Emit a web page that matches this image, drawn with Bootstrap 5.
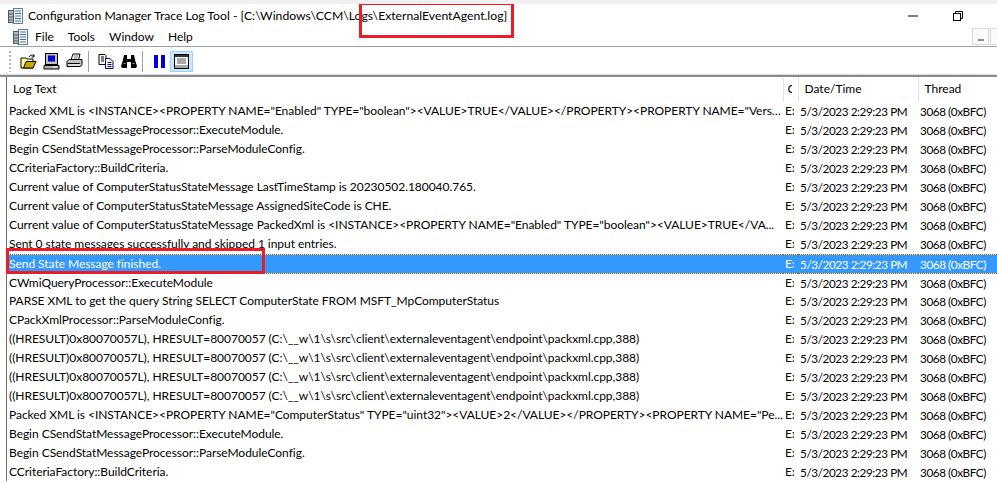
<!DOCTYPE html>
<html lang="en"><head><meta charset="utf-8"><title>Configuration Manager Trace Log Tool</title>
<link href="https://cdn.jsdelivr.net/npm/bootstrap@5.3.0/dist/css/bootstrap.min.css" rel="stylesheet">
<style>
html,body{height:483px;overflow:hidden;background:#fff}
body{font-family:"Lato","Noto Sans",sans-serif;font-size:12px;color:#000;position:relative;border-top:4px solid #f0f0f0}
.titlebar{height:23px;background:#fff;padding-left:7px;padding-top:1px;gap:5px;font-size:12.2px}
.winbtns{margin-left:auto;gap:35px;padding-right:34px}
.menubar{height:19px;background:#fff;padding-left:12px;padding-top:1px}
.menubar span{margin-right:14px}
.menubar svg{margin-right:7px}
.mdibtn{width:17px;height:17px;border:1px solid #d9d9d9;background:#fbfbfb;display:flex;align-items:flex-end;justify-content:center;padding-bottom:3px;flex:none}
.mdibtn i{display:block;width:6px;height:2px;background:#8a8f96}
.mdiwrap{margin-left:auto;margin-right:-10px;margin-top:-1px;gap:1px}
.toolbar{background:#fff;border-top:1px solid #a0a0a0;border-bottom:2px solid #8c8c8c;padding-left:9px;height:31px;box-shadow:inset 0 -1px 0 #d8d8d8}
.grip{width:2px;height:21px;margin-right:6px;background:repeating-linear-gradient(#b5b5b5 0 2px,transparent 2px 4px)}
.tool{width:23px;height:21px;display:flex;align-items:center;justify-content:center}
.tool.on{background:#cce8ff;border:1px solid #99d1ff;margin-left:-1px}
.sepv{width:1px;height:21px;background:#a0a0a0;margin:0 5px 0 2px}
.logwrap{margin-left:6px;background:#fff;border-left:1px solid #6d6d6d;height:404px;overflow:hidden;margin-bottom:2px}
.logtable{table-layout:fixed;width:990px;margin:0;border-collapse:collapse}
.logtable th,.logtable td{padding:0;white-space:nowrap;overflow:hidden;border:0;font-weight:400;background:transparent;color:#000}
.logtable th{height:25px;padding-left:6px;border-right:1px solid #e5e5e5;padding-bottom:4px}
.logtable td{height:19px;padding-left:2px;line-height:18px;text-overflow:ellipsis;letter-spacing:-.04px}
.logtable td.num{letter-spacing:-.4px;font-size:11.7px}
.logtable tr.sel td{background:#3399ff;color:#fff;border-top:1px dotted #8a5a10;border-bottom:1px dotted #8a5a10}
.clip{display:block;width:9px;overflow:hidden}
.cliph{display:block;width:4px;overflow:hidden}
.c1{width:776px}.c2{width:15px}.c3{width:120px}.c4{width:79px}
.mark-box{position:absolute;border:3px solid #ed1c24;pointer-events:none}
.mark-title{left:359px;top:-2px;width:155px;height:36px}
.mark-row{left:6px;top:244px;width:259px;height:26px}
</style></head>
<body>
<div class="titlebar d-flex align-items-center">
<svg width="16" height="16" viewBox="0 0 16 16"><rect x="6.500" y=".5" width="9" height="15" fill="#fff" stroke="#5f7f9f"/><path d="M8 3h6M8 5.500h6M8 8h6M8 10.500h6M8 13h6" stroke="#3a6ea5"/><rect x="1.500" y="2.500" width="5" height="12" fill="#b4bec8" stroke="#4f5b68"/><path d="M2 6h4M2 9h4M2 12h4" stroke="#4f5b68"/></svg>
<span>Configuration Manager Trace Log Tool - [C:\Windows\CCM\Logs\ExternalEventAgent.log]</span>
<div class="winbtns d-flex align-items-center">
<svg width="10" height="10" viewBox="0 0 10 10"><path d="M0 5h10" stroke="#000"/></svg>
<svg width="10" height="10" viewBox="0 0 10 10" fill="none" stroke="#000"><path d="M2.500 2.500V.5h7v7h-2"/><rect x=".5" y="2.500" width="7" height="7"/></svg>
</div></div>
<div class="menubar d-flex align-items-center">
<svg width="16" height="16" viewBox="0 0 16 16"><rect x="6.500" y=".5" width="9" height="15" fill="#fff" stroke="#5f7f9f"/><path d="M8 3h6M8 5.500h6M8 8h6M8 10.500h6M8 13h6" stroke="#3a6ea5"/><rect x="1.500" y="2.500" width="5" height="12" fill="#b4bec8" stroke="#4f5b68"/><path d="M2 6h4M2 9h4M2 12h4" stroke="#4f5b68"/></svg>
<span>File</span><span>Tools</span><span>Window</span><span>Help</span>
<div class="mdiwrap d-flex"><div class="mdibtn"><i></i></div><div class="mdibtn"></div></div>
</div>
<div class="toolbar d-flex align-items-center">
<div class="grip"></div>
<div class="tool"><svg width="17" height="15" viewBox="0 0 17 15"><path d="M1 4h5l1 1h6v9H1z" fill="#ffff99" stroke="#000"/><path d="M3.500 14 6 7.500h10L13 14z" fill="#c8a800" stroke="#000"/><path d="M9 3c1-2 3-2.500 5-1.500M14 .5v2.500h-2.500" fill="none" stroke="#000"/></svg></div>
<div class="tool"><svg width="17" height="17" viewBox="0 0 17 17"><rect x="2.500" y=".5" width="12" height="11" fill="#c0c0c0" stroke="#000"/><rect x="5" y="2.500" width="7" height="6" fill="#0000c8"/><path d="M1 12.500h15v3.500H1z" fill="#b5b5b5" stroke="#000"/><path d="M10 14h4" stroke="#fff"/></svg></div>
<div class="tool"><svg width="17" height="16" viewBox="0 0 17 16"><path d="M5 7 7 1h7l-1.500 6z" fill="#fff" stroke="#000"/><path d="M1 8.500 3 6.500h13v5l-1.500 2H1z" fill="#c0c0c0" stroke="#000"/><path d="M2 10.500h12" stroke="#000"/><path d="M3 12h11" stroke="#fff"/><path d="M8 3h4M7.500 5h4" stroke="#777"/></svg></div>
<div class="sepv"></div>
<div class="tool"><svg width="16" height="15" viewBox="0 0 16 15"><path d="M1 .5h6l1 1v9H1z" fill="#fff" stroke="#000"/><path d="M3 3h3M3 5h3M3 7h3" stroke="#000"/><path d="M7.500 4.500H12l3 3v7H7.500z" fill="#fff" stroke="#000080"/><path d="M9.500 8.500h4M9.500 10.500h4M9.500 12.500h4" stroke="#000080"/></svg></div>
<div class="tool"><svg width="16" height="14" viewBox="0 0 16 14"><path d="M3 1h3v4h4V1h3l1 5 2 6-1 2H10V8H6v6H1L0 12l2-6z" fill="#000"/><path d="M2.500 9.500h2M11.500 9.500h2" stroke="#9a9a9a"/></svg></div>
<div class="sepv"></div>
<div class="tool"><svg width="11" height="13" viewBox="0 0 11 13"><path d="M0 0h4v13H0zM7 0h4v13H7z" fill="#0000d8"/></svg></div>
<div class="tool on"><svg width="15" height="15" viewBox="0 0 15 15"><rect x=".5" y=".5" width="14" height="14" fill="#fff" stroke="#000"/><rect x="1" y="1" width="13" height="2" fill="#30343c"/><path d="M3 5h9M3 7h9M3 9h9" stroke="#555"/><rect x="1" y="11" width="13" height="3" fill="#a8a8a8"/></svg></div>
</div>
<div class="logwrap">
<table class="table logtable">
<colgroup><col class="c1"><col class="c2"><col class="c3"><col class="c4"></colgroup>
<thead><tr><th>Log Text</th><th class="ps-1"><span class="cliph">C</span></th><th>Date/Time</th><th>Thread</th></tr></thead>
<tbody>
<tr><td>Packed XML is &lt;INSTANCE&gt;&lt;PROPERTY NAME="Enabled" TYPE="boolean"&gt;&lt;VALUE&gt;TRUE&lt;/VALUE&gt;&lt;/PROPERTY&gt;&lt;PROPERTY NAME="Versi...</td><td><span class="clip">Ex</span></td><td class="num">5/3/2023 2:29:23 PM</td><td class="num">3068 (0xBFC)</td></tr>
<tr><td>Begin CSendStatMessageProcessor::ExecuteModule.</td><td><span class="clip">Ex</span></td><td class="num">5/3/2023 2:29:23 PM</td><td class="num">3068 (0xBFC)</td></tr>
<tr><td>Begin CSendStatMessageProcessor::ParseModuleConfig.</td><td><span class="clip">Ex</span></td><td class="num">5/3/2023 2:29:23 PM</td><td class="num">3068 (0xBFC)</td></tr>
<tr><td>CCriteriaFactory::BuildCriteria.</td><td><span class="clip">Ex</span></td><td class="num">5/3/2023 2:29:23 PM</td><td class="num">3068 (0xBFC)</td></tr>
<tr><td>Current value of ComputerStatusStateMessage LastTimeStamp is 20230502.180040.765.</td><td><span class="clip">Ex</span></td><td class="num">5/3/2023 2:29:23 PM</td><td class="num">3068 (0xBFC)</td></tr>
<tr><td>Current value of ComputerStatusStateMessage AssignedSiteCode is CHE.</td><td><span class="clip">Ex</span></td><td class="num">5/3/2023 2:29:23 PM</td><td class="num">3068 (0xBFC)</td></tr>
<tr><td>Current value of ComputerStatusStateMessage PackedXml is &lt;INSTANCE&gt;&lt;PROPERTY NAME="Enabled" TYPE="boolean"&gt;&lt;VALUE&gt;TRUE&lt;/VA...</td><td><span class="clip">Ex</span></td><td class="num">5/3/2023 2:29:23 PM</td><td class="num">3068 (0xBFC)</td></tr>
<tr><td>Sent 0 state messages successfully and skipped 1 input entries.</td><td><span class="clip">Ex</span></td><td class="num">5/3/2023 2:29:23 PM</td><td class="num">3068 (0xBFC)</td></tr>
<tr class="sel"><td>Send State Message finished.</td><td><span class="clip">Ex</span></td><td class="num">5/3/2023 2:29:23 PM</td><td class="num">3068 (0xBFC)</td></tr>
<tr><td>CWmiQueryProcessor::ExecuteModule</td><td><span class="clip">Ex</span></td><td class="num">5/3/2023 2:29:23 PM</td><td class="num">3068 (0xBFC)</td></tr>
<tr><td>PARSE XML to get the query String SELECT ComputerState FROM MSFT_MpComputerStatus</td><td><span class="clip">Ex</span></td><td class="num">5/3/2023 2:29:23 PM</td><td class="num">3068 (0xBFC)</td></tr>
<tr><td>CPackXmlProcessor::ParseModuleConfig.</td><td><span class="clip">Ex</span></td><td class="num">5/3/2023 2:29:23 PM</td><td class="num">3068 (0xBFC)</td></tr>
<tr><td>((HRESULT)0x80070057L), HRESULT=80070057 (C:\__w\1\s\src\client\externaleventagent\endpoint\packxml.cpp,388)</td><td><span class="clip">Ex</span></td><td class="num">5/3/2023 2:29:23 PM</td><td class="num">3068 (0xBFC)</td></tr>
<tr><td>((HRESULT)0x80070057L), HRESULT=80070057 (C:\__w\1\s\src\client\externaleventagent\endpoint\packxml.cpp,388)</td><td><span class="clip">Ex</span></td><td class="num">5/3/2023 2:29:23 PM</td><td class="num">3068 (0xBFC)</td></tr>
<tr><td>((HRESULT)0x80070057L), HRESULT=80070057 (C:\__w\1\s\src\client\externaleventagent\endpoint\packxml.cpp,388)</td><td><span class="clip">Ex</span></td><td class="num">5/3/2023 2:29:23 PM</td><td class="num">3068 (0xBFC)</td></tr>
<tr><td>((HRESULT)0x80070057L), HRESULT=80070057 (C:\__w\1\s\src\client\externaleventagent\endpoint\packxml.cpp,388)</td><td><span class="clip">Ex</span></td><td class="num">5/3/2023 2:29:23 PM</td><td class="num">3068 (0xBFC)</td></tr>
<tr><td>Packed XML is &lt;INSTANCE&gt;&lt;PROPERTY NAME="ComputerStatus" TYPE="uint32"&gt;&lt;VALUE&gt;2&lt;/VALUE&gt;&lt;/PROPERTY&gt;&lt;PROPERTY NAME="Pe...</td><td><span class="clip">Ex</span></td><td class="num">5/3/2023 2:29:23 PM</td><td class="num">3068 (0xBFC)</td></tr>
<tr><td>Begin CSendStatMessageProcessor::ExecuteModule.</td><td><span class="clip">Ex</span></td><td class="num">5/3/2023 2:29:23 PM</td><td class="num">3068 (0xBFC)</td></tr>
<tr><td>Begin CSendStatMessageProcessor::ParseModuleConfig.</td><td><span class="clip">Ex</span></td><td class="num">5/3/2023 2:29:23 PM</td><td class="num">3068 (0xBFC)</td></tr>
<tr><td>CCriteriaFactory::BuildCriteria.</td><td><span class="clip">Ex</span></td><td class="num">5/3/2023 2:29:23 PM</td><td class="num">3068 (0xBFC)</td></tr>
</tbody></table>
</div>
<div class="mark-box mark-title"></div>
<div class="mark-box mark-row"></div>
</body></html>
